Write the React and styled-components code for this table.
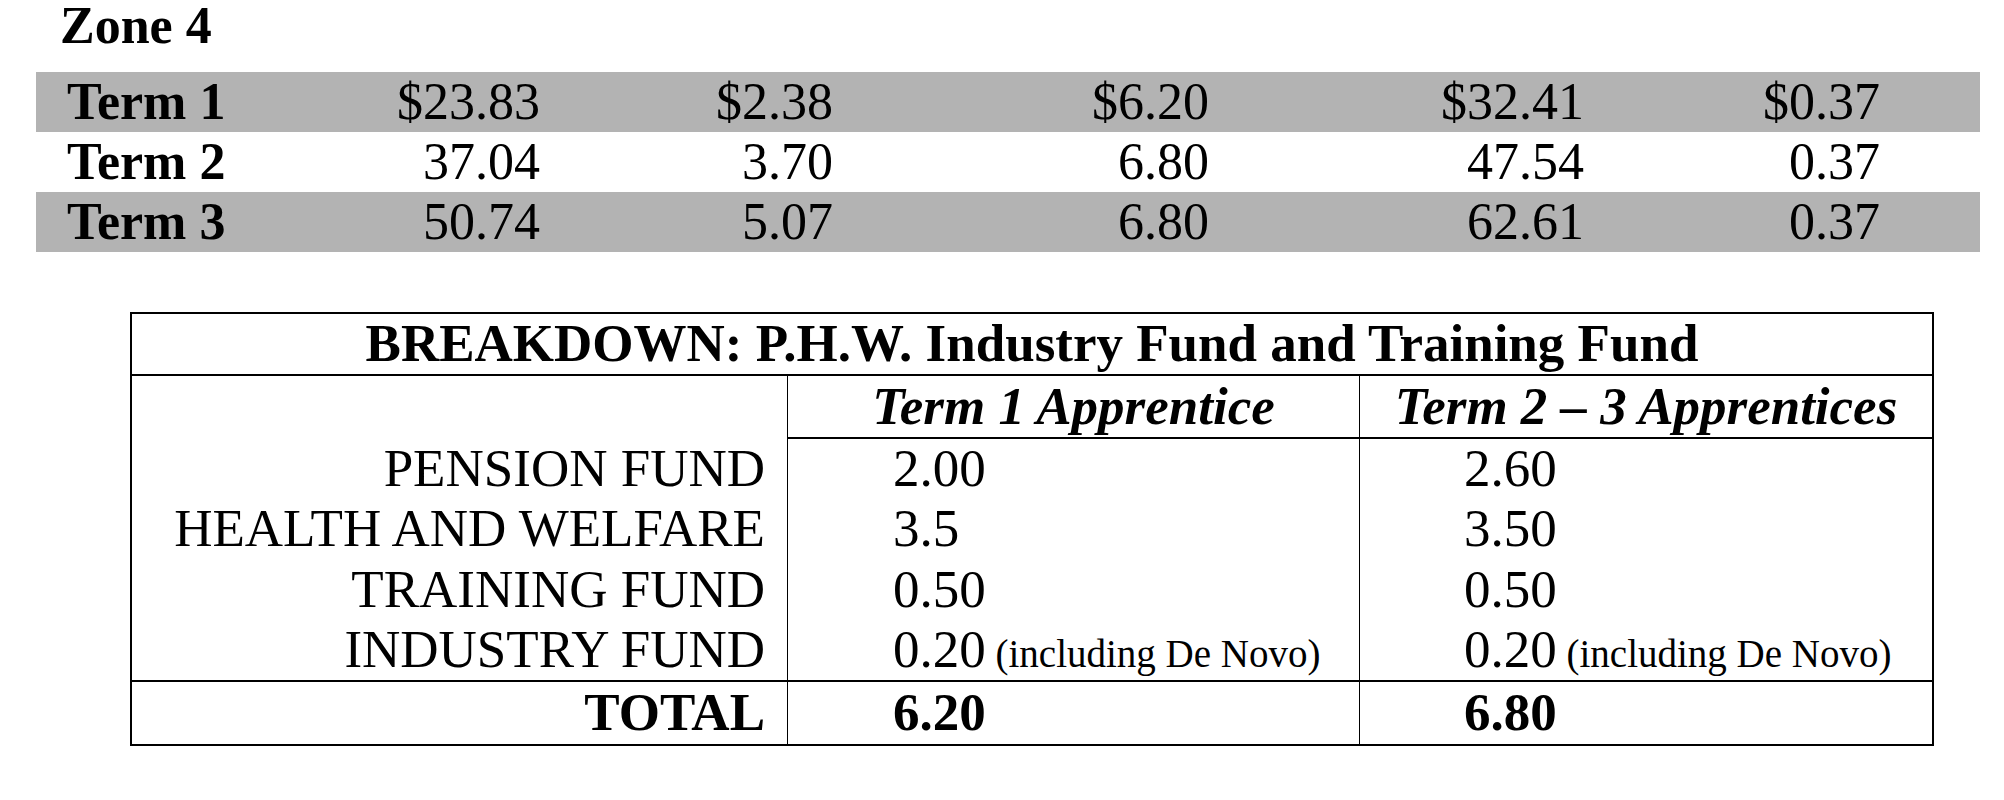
import React from 'react';
import styled, { createGlobalStyle } from 'styled-components';

const GlobalStyle = createGlobalStyle`
    body {
        margin: 0;
        background: #fff;
        color: #000;
        font-family: "Liberation Serif", "Times New Roman", serif;
    }
`;

const Page = styled.div`
    width: 2004px;
    height: 800px;
    overflow: hidden;
`;

const ZoneTitle = styled.h1`
    margin: 0 0 20px 60px;
    font-size: 52px;
    line-height: 52px;
    font-weight: bold;
`;

const RateBand = styled.div`
    margin-left: 36px;
    width: 1944px;
`;

const RateRow = styled.div`
    display: grid;
    grid-template-columns: 300px 173px 293px 376px 375px 296px;
    padding-left: 31px;
    height: 60px;
    line-height: 60px;
    font-size: 52px;
    background: ${p => (p.$shaded ? '#b3b3b3' : 'transparent')};
`;

const TermLabel = styled.div`
    font-weight: bold;
`;

const Amount = styled.div`
    text-align: right;
`;

const Breakdown = styled.div`
    margin: 60px 0 0 130px;
    width: 1804px;
    box-sizing: border-box;
    border: 2px solid #000;
    font-size: 53px;
`;

const Heading = styled.div`
    height: 62px;
    box-sizing: border-box;
    line-height: 59px;
    text-align: center;
    font-weight: bold;
    border-bottom: 2px solid #000;
`;

const BreakdownGrid = styled.div`
    display: grid;
    grid-template-columns: 655px 572px 1fr;
    grid-template-rows: 63px repeat(4, 60.25px) 64px;
`;

const Cell = styled.div`
    box-sizing: border-box;
    line-height: ${p => (p.$total ? '61px' : '59px')};
    border-top: ${p => (p.$total ? '2px solid #000' : 'none')};
    border-left: ${p => (p.$divided ? '1px solid #000' : 'none')};
    font-weight: ${p => (p.$total ? 'bold' : 'normal')};
    white-space: nowrap;
`;

const Label = styled(Cell)`
    text-align: right;
    padding-right: 22px;
`;

const Value = styled(Cell)`
    padding-left: ${p => p.$indent}px;
`;

const SubHead = styled(Cell)`
    text-align: center;
    line-height: 60px;
    font-weight: bold;
    font-style: italic;
    border-bottom: 2px solid #000;
`;

const Note = styled.span`
    font-size: 39px;
`;

const rates = [
    { term: 'Term 1', values: ['$23.83', '$2.38', '$6.20', '$32.41', '$0.37'] },
    { term: 'Term 2', values: ['37.04', '3.70', '6.80', '47.54', '0.37'] },
    { term: 'Term 3', values: ['50.74', '5.07', '6.80', '62.61', '0.37'] },
];

const funds = [
    { name: 'PENSION FUND', first: '2.00', later: '2.60' },
    { name: 'HEALTH AND WELFARE', first: '3.5', later: '3.50' },
    { name: 'TRAINING FUND', first: '0.50', later: '0.50' },
    { name: 'INDUSTRY FUND', first: '0.20', later: '0.20', note: '(including De Novo)' },
];

const App = () => {
    return (
        <Page>
            <GlobalStyle />
            <ZoneTitle>Zone 4</ZoneTitle>
            <RateBand>
                {rates.map((row, i) => (
                    <RateRow key={row.term} $shaded={i !== 1}>
                        <TermLabel>{row.term}</TermLabel>
                        {row.values.map((v, k) => (
                            <Amount key={k}>{v}</Amount>
                        ))}
                    </RateRow>
                ))}
            </RateBand>
            <Breakdown>
                <Heading>BREAKDOWN: P.H.W. Industry Fund and Training Fund</Heading>
                <BreakdownGrid>
                    <Cell />
                    <SubHead $divided>Term 1 Apprentice</SubHead>
                    <SubHead $divided>Term 2 – 3 Apprentices</SubHead>
                    {funds.map(f => (
                        <React.Fragment key={f.name}>
                            <Label>{f.name}</Label>
                            <Value $divided $indent={105}>
                                {f.first}
                                {f.note && <Note> {f.note}</Note>}
                            </Value>
                            <Value $divided $indent={104}>
                                {f.later}
                                {f.note && <Note> {f.note}</Note>}
                            </Value>
                        </React.Fragment>
                    ))}
                    <Label $total>TOTAL</Label>
                    <Value $total $divided $indent={105}>6.20</Value>
                    <Value $total $divided $indent={104}>6.80</Value>
                </BreakdownGrid>
            </Breakdown>
        </Page>
    );
};

export default App;
